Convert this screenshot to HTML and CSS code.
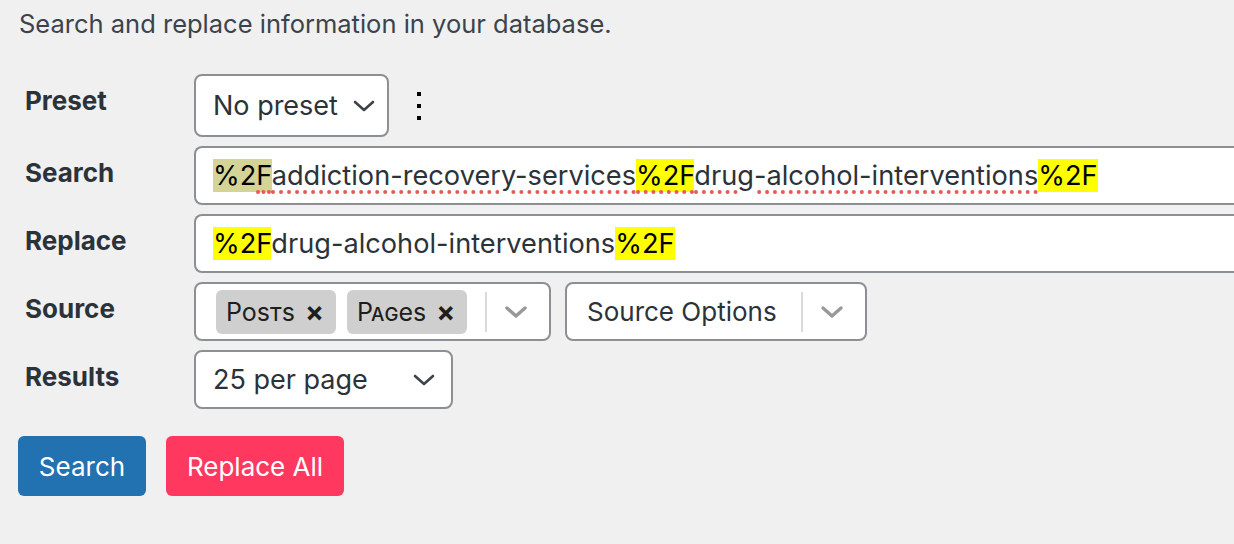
FILE: index.html
```html
<!DOCTYPE html>
<html lang="en">
<head>
<meta charset="utf-8">
<title>Search Regex</title>
<link rel="stylesheet" href="styles.css">
</head>
<body>
<div class="page">
  <p class="intro">Search and replace information in your database.</p>

  <div class="form">
    <div class="label">Preset</div>
    <div class="field field-preset">
      <div class="select select-preset">
        <span>No preset</span>
        <svg class="chev-thin" width="24" height="14" viewBox="0 0 24 14"><path d="M3 3 L12 11 L21 3" fill="none" stroke="#3c434a" stroke-width="2.6" stroke-linecap="round" stroke-linejoin="round"/></svg>
      </div>
      <svg class="kebab" width="8" height="30" viewBox="0 0 8 30"><rect x="2" y="1" width="4" height="4"/><rect x="2" y="13" width="4" height="4"/><rect x="2" y="25" width="4" height="4"/></svg>
    </div>

    <div class="label">Search</div>
    <div class="field">
      <div class="text-input"><mark class="sel">%2</mark><span class="spell"><mark class="sel">F</mark>addiction-recovery-services<mark>%2F</mark>drug-alcohol-interventions</span><mark>%2F</mark></div>
    </div>

    <div class="label">Replace</div>
    <div class="field">
      <div class="text-input"><mark>%2F</mark>drug-alcohol-interventions<mark>%2F</mark></div>
    </div>

    <div class="label">Source</div>
    <div class="field field-source">
      <div class="multi multi-source">
        <div class="chips">
          <span class="chip">Posts <b class="x">×</b></span>
          <span class="chip">Pages <b class="x">×</b></span>
        </div>
        <span class="sep"></span>
        <svg class="chev-bold" width="26" height="16" viewBox="0 0 26 16"><path d="M4 4 L13 12 L22 4" fill="none" stroke="#999" stroke-width="3.4" stroke-linecap="round" stroke-linejoin="round"/></svg>
      </div>
      <div class="multi multi-options">
        <span class="placeholder">Source Options</span>
        <span class="sep"></span>
        <svg class="chev-bold" width="26" height="16" viewBox="0 0 26 16"><path d="M4 4 L13 12 L22 4" fill="none" stroke="#999" stroke-width="3.4" stroke-linecap="round" stroke-linejoin="round"/></svg>
      </div>
    </div>

    <div class="label">Results</div>
    <div class="field">
      <div class="select select-results">
        <span>25 per page</span>
        <svg class="chev-thin" width="24" height="14" viewBox="0 0 24 14"><path d="M3 3 L12 11 L21 3" fill="none" stroke="#3c434a" stroke-width="2.6" stroke-linecap="round" stroke-linejoin="round"/></svg>
      </div>
    </div>
  </div>

  <div class="actions">
    <button class="btn btn-primary">Search</button>
    <button class="btn btn-danger">Replace All</button>
  </div>
</div>
</body>
</html>
```

FILE: styles.css
```css
html, body {
  margin: 0;
  padding: 0;
  overflow: hidden;
}

body {
  background: #f0f0f1;
  font-family: Inter, "Noto Sans", "Liberation Sans", sans-serif;
  color: #3c434a;
}

.page {
  padding: 0 0 0 19px;
}

.intro {
  margin: 0;
  padding-top: 7px;
  font-size: 25.5px;
  line-height: 34px;
  color: #3c434a;
}

.form {
  margin-top: 33px;
  display: grid;
  grid-template-columns: 169px 1fr;
  row-gap: 9px;
  padding-left: 6px;
}

.label {
  font-weight: 700;
  font-size: 26px;
  color: #2c3338;
  padding-top: 12px;
  line-height: 30px;
}

.field {
  display: flex;
  align-items: center;
}

.field-preset {
  gap: 26px;
}

.select,
.multi,
.text-input {
  box-sizing: border-box;
  background: #fff;
  border: 2px solid #8c8f94;
  border-radius: 8px;
  color: #2c3338;
  font-size: 27px;
}

.select {
  height: 63px;
  display: flex;
  align-items: center;
  justify-content: space-between;
  padding: 0 11px 0 17px;
}

.select-preset {
  width: 195px;
}

.select-results {
  width: 259px;
  height: 59px;
  padding-right: 15px;
}

.chev-thin {
  display: block;
}

.kebab {
  fill: #000;
  display: block;
}

.text-input {
  flex: 1;
  height: 59px;
  padding: 0 0 0 17px;
  border-right: none;
  border-radius: 8px 0 0 8px;
  line-height: 55px;
  white-space: nowrap;
  overflow: hidden;
  font-size: 27.2px;
  color: #2c3338;
}

mark {
  background: #ffff00;
  color: #000;
}

mark.sel {
  background: #d4d497;
}

.spell {
  text-decoration: underline dotted #e65a56;
  text-decoration-thickness: 4px;
  text-underline-offset: 5px;
}

.field-source {
  gap: 14px;
}

.multi {
  height: 59px;
  display: flex;
  align-items: center;
  padding: 0 20px 0 20px;
}

.multi-source {
  width: 357px;
}

.multi-options {
  width: 302px;
}

.chips {
  display: flex;
  gap: 11px;
  flex: 1;
}

.chip {
  display: inline-flex;
  align-items: center;
  gap: 10px;
  height: 44px;
  padding: 0 12px 0 10px;
  background: #cfcfcf;
  border-radius: 6px;
  font-variant: small-caps;
  font-size: 25px;
  color: #1e1e1e;
}

.chip .x {
  font-size: 28px;
  font-weight: 700;
  font-variant: normal;
}

.placeholder {
  flex: 1;
  color: #2c3338;
  font-size: 26px;
}

.sep {
  width: 2px;
  height: 40px;
  background: #d9d9d9;
  margin: 0 16px 0 0;
}

.chev-bold {
  display: block;
}

.actions {
  display: flex;
  gap: 20px;
  margin-top: 27px;
}

.btn {
  height: 60px;
  border: none;
  border-radius: 6px;
  color: #fff;
  font-family: inherit;
  font-size: 26px;
  padding: 0;
  white-space: nowrap;
}

.btn-primary {
  background: #2271b1;
  margin-left: -1px;
  width: 128px;
}

.btn-danger {
  background: #ff3860;
  width: 178px;
}
```
